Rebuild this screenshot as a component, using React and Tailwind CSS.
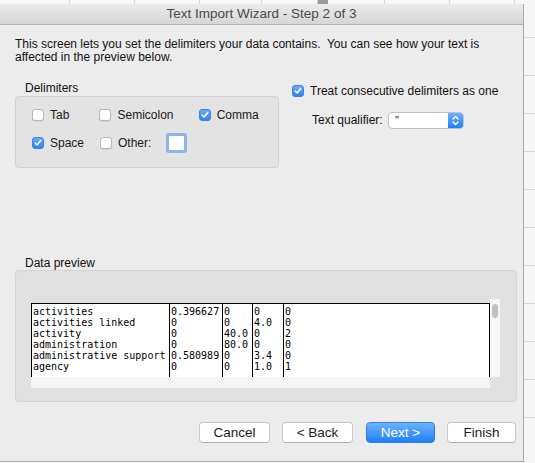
import React from "react";

function Check({ checked }) {
  if (checked) {
    return (
      <div className="w-[12px] h-[12px] rounded-[3px] bg-gradient-to-b from-[#6aabf7] to-[#2d84f4] border border-[#3a82e4] flex items-center justify-center shrink-0">
        <svg width="8" height="8" viewBox="0 0 8 8">
          <path d="M1.3 4.2 L3.1 6 L6.7 1.6" fill="none" stroke="white" strokeWidth="1.6" strokeLinecap="round" strokeLinejoin="round" />
        </svg>
      </div>
    );
  }
  return (
    <div className="w-[12px] h-[12px] rounded-[3px] bg-white border border-[#b8b8b8] shadow-[0_0.5px_0.5px_rgba(0,0,0,0.15)] shrink-0" />
  );
}

function Opt({ checked, label, w }) {
  return (
    <div className={`flex items-center ${w}`}>
      <Check checked={checked} />
      <span className="ml-[6px] text-[12px] leading-[13px] text-[#1a1a1a]">{label}</span>
    </div>
  );
}

const rows = [
  ["activities", "0.396627", "0", "0", "0"],
  ["activities linked", "0", "0", "4.0", "0"],
  ["activity", "0", "40.0", "0", "2"],
  ["administration", "0", "80.0", "0", "0"],
  ["administrative support", "0.580989", "0", "3.4", "0"],
  ["agency", "0", "0", "1.0", "1"],
];

function Col({ i, w }) {
  return (
    <div className={`${w} border-l border-black pt-[2px] pl-[1px] h-full overflow-hidden`}>
      {rows.map((r, k) => (
        <div key={k} className="h-[11px] leading-[11px] whitespace-pre">{r[i]}</div>
      ))}
    </div>
  );
}

function Btn({ children, primary, w, ml }) {
  return (
    <div
      className={`${w} ${ml} h-[21px] rounded-[4px] flex items-center justify-center text-[13.5px] leading-none ${
        primary
          ? "bg-gradient-to-b from-[#6cb1fb] to-[#1a7ff8] border border-[#2f7de6] text-white"
          : "bg-white border border-[#c6c6c6] border-b-[#b0b0b0] text-[#1a1a1a]"
      }`}
    >
      {children}
    </div>
  );
}

export default function App() {
  return (
    <div className="w-[535px] h-[463px] bg-[#f6f6f6] overflow-hidden font-['Liberation_Sans',Arial,sans-serif]">
      {/* spreadsheet top strip */}
      <div className="h-[4px] flex">
        <div className="w-[70px] border-r border-[#d4d4d4]" />
        <div className="w-[65px] border-r border-[#d4d4d4]" />
        <div className="w-[65px] border-r border-[#d4d4d4]" />
        <div className="w-[62px] border-r border-[#d4d4d4]" />
        <div className="w-[56px] border-r border-[#d4d4d4]" />
        <div className="w-[10px] bg-[#9a9a9a]" />
        <div className="w-[57px] border-r border-[#d4d4d4]" />
        <div className="w-[65px] border-r border-[#d4d4d4]" />
        <div className="w-[65px] border-r border-[#d4d4d4]" />
      </div>
      <div className="flex">
        <div className="w-[524px] h-[458px] bg-[#ececec] border-r border-b border-[#a9a9a9] flex flex-col">
          {/* title bar */}
          <div className="h-[21px] bg-gradient-to-b from-[#ebebeb] to-[#d6d6d6] border-b border-[#b4b4b4] flex items-center justify-center">
            <span className="text-[13.5px] text-[#4a4a4a] leading-none">Text Import Wizard - Step 2 of 3</span>
          </div>
          <div className="pl-[15px]">
            <p className="mt-[13px] text-[12px] leading-[13px] text-[#111]">
              This screen lets you set the delimiters your data contains.&nbsp; You can see how your text is
              <br />
              affected in the preview below.
            </p>
            <div className="mt-[18px] flex">
              <div className="w-[264px]">
                <div className="pl-[10px] text-[12px] leading-[13px] text-[#111]">Delimiters</div>
                <div className="mt-[1px] h-[72px] bg-[#e3e3e3] border border-[#d2d2d2] rounded-[4px] pl-[16px] pt-[12px]">
                  <div className="flex h-[12px]">
                    <Opt label="Tab" w="w-[68px]" />
                    <Opt label="Semicolon" w="w-[100px]" />
                    <Opt checked label="Comma" w="w-[80px]" />
                  </div>
                  <div className="flex h-[20px] mt-[12px] items-center">
                    <Opt checked label="Space" w="w-[68px]" />
                    <Opt label="Other:" w="w-[52px]" />
                    <div className="ml-[14px] w-[21px] h-[20px] rounded-[3px] border-[3px] border-[#8cb5ee] bg-white" />
                  </div>
                </div>
              </div>
              <div className="ml-[13px] pt-[3px]">
                <div className="flex items-center h-[12px]">
                  <Check checked />
                  <span className="ml-[6px] text-[12px] leading-[13px] text-[#111]">Treat consecutive delimiters as one</span>
                </div>
                <div className="mt-[14px] flex items-center h-[18px] pl-[20px]">
                  <span className="text-[12px] leading-[13px] text-[#111] w-[76px]">Text qualifier:</span>
                  <div className="w-[76px] h-[17px] bg-white border border-[#c2c2c2] rounded-[4px] flex overflow-hidden">
                    <div className="flex-1 pl-[6px] text-[11px] leading-[15px] text-[#222]">"</div>
                    <div className="w-[15px] h-full bg-gradient-to-b from-[#6cb1fb] to-[#1a7ff8] flex items-center justify-center">
                      <svg width="7" height="11" viewBox="0 0 7 11">
                        <path d="M1 4 L3.5 1.5 L6 4 M1 7 L3.5 9.5 L6 7" fill="none" stroke="white" strokeWidth="1.3" strokeLinecap="round" strokeLinejoin="round" />
                      </svg>
                    </div>
                  </div>
                </div>
              </div>
            </div>
            <div className="mt-[89px] pl-[10px] text-[12px] leading-[13px] text-[#111]">Data preview</div>
            <div className="w-[502px] h-[132px] bg-[#e1e1e1] border border-[#d4d4d4] rounded-[4px] pl-[15px] pt-[32px]">
              <div className="flex">
                <div className="flex flex-col">
                  <div className="w-[459px] h-[74px] bg-white border-t border-r border-black flex text-[10px] font-['DejaVu_Sans_Mono',monospace] text-black">
                    <Col i={0} w="w-[138px]" />
                    <Col i={1} w="w-[53px]" />
                    <Col i={2} w="w-[30px]" />
                    <Col i={3} w="w-[31px]" />
                    <Col i={4} w="flex-1" />
                  </div>
                  <div className="w-[459px] h-[11px] bg-[#f5f5f5]" />
                </div>
                <div className="w-[10px] h-[78px] -mt-[4px] bg-[#f6f6f6] pt-[5px] pl-[2px]">
                  <div className="w-[6px] h-[14px] rounded-full bg-[#c0c0c0]" />
                </div>
              </div>
            </div>
            <div className="mt-[20px] flex pl-[184px]">
              <Btn w="w-[71px]" ml="">Cancel</Btn>
              <Btn w="w-[71px]" ml="ml-[12px]">&lt; Back</Btn>
              <Btn w="w-[69px]" ml="ml-[13px]" primary>Next &gt;</Btn>
              <Btn w="w-[69px]" ml="ml-[12px]">Finish</Btn>
            </div>
          </div>
        </div>
        <div className="flex-1 flex flex-col">
          <div className="h-[34px] border-b border-[#d8d8d8]" />
          <div className="h-[38px] border-b border-[#d8d8d8]" />
          <div className="h-[38px] border-b border-[#d8d8d8]" />
          <div className="h-[38px] border-b border-[#d8d8d8]" />
          <div className="h-[38px] border-b border-[#d8d8d8]" />
          <div className="h-[38px] border-b border-[#d8d8d8]" />
          <div className="h-[38px] border-b border-[#d8d8d8]" />
          <div className="h-[38px] border-b border-[#d8d8d8]" />
          <div className="h-[38px] border-b border-[#d8d8d8]" />
          <div className="h-[38px] border-b border-[#d8d8d8]" />
          <div className="h-[38px] border-b border-[#d8d8d8]" />
        </div>
      </div>
    </div>
  );
}
